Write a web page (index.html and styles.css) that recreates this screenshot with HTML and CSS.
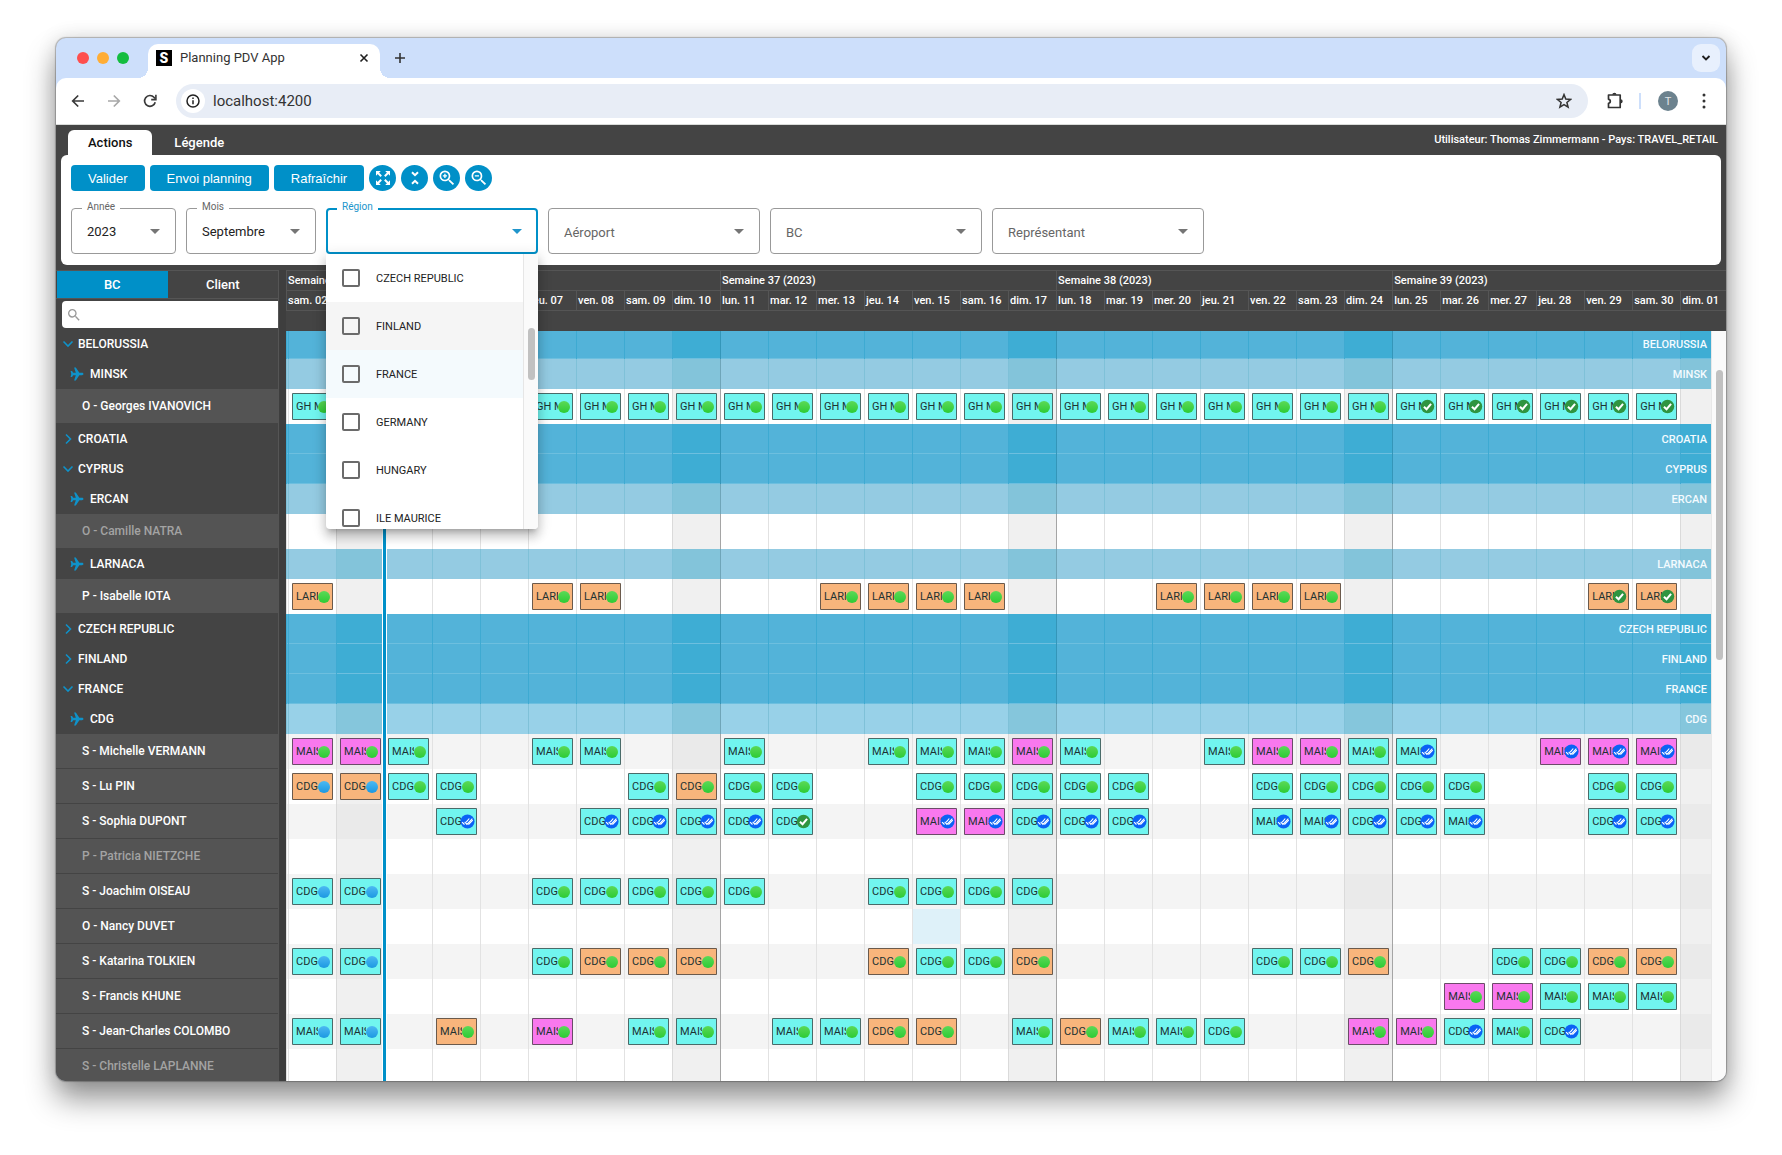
FILE: index.html
```html
<!DOCTYPE html>
<html lang="fr">
<head>
<meta charset="utf-8">
<meta name="viewport" content="width=device-width, initial-scale=1">
<title>Planning PDV App</title>
<link rel="stylesheet" href="styles.css">
</head>
<body>
<svg class="defs" aria-hidden="true">
  <symbol id="i-plane" viewBox="0 0 24 24"><path fill="currentColor" d="M23 12c0-1.200-1-2-2.300-2h-4.700L10 1H7l3 9H5.500L3.500 7H1l1.200 5L1 17h2.500l2-3H10l-3 9h3l6-9h4.700c1.300 0 2.300-.8 2.300-2z"/></symbol>
  <symbol id="i-down" viewBox="0 0 12 12"><path d="M1.500 3.500 6 8l4.500-4.500" fill="none" stroke="currentColor" stroke-width="1.600"/></symbol>
  <symbol id="i-right" viewBox="0 0 12 12"><path d="M4 1.500 8.500 6 4 10.500" fill="none" stroke="currentColor" stroke-width="1.600"/></symbol>
  <symbol id="i-search" viewBox="0 0 24 24"><path fill="currentColor" d="M15.500 14h-.79l-.28-.27A6.470 6.470 0 0 0 16 9.500 6.500 6.500 0 1 0 9.500 16c1.610 0 3.090-.59 4.230-1.570l.27.28v.79l5 4.990L20.490 19l-4.990-5zm-6 0C7.010 14 5 11.990 5 9.500S7.010 5 9.500 5 14 7.010 14 9.500 11.990 14 9.500 14z"/></symbol>
  <symbol id="i-check" viewBox="0 0 16 16"><circle cx="8" cy="8" r="7.200" fill="#2f9440"/><path d="M4.200 8.200 7 10.900 11.800 5.200" fill="none" stroke="#fff" stroke-width="2.200"/></symbol>
  <symbol id="i-double" viewBox="0 0 16 16"><circle cx="8" cy="8" r="7.500" fill="#0b62f5"/><path d="M2.200 8.600 4.800 11.200M5 8.400l2.400 2.600 5.800-6M6.600 8.600 9.900 4.800M9 11.400l4.600-4.800" fill="none" stroke="#fff" stroke-width="1.200"/></symbol>
</svg>

<div class="window">
  <header class="tabstrip">
    <div class="lights"><i class="light red"></i><i class="light amber"></i><i class="light green"></i></div>
    <div class="browser-tab">
      <span class="favicon">S</span>
      <span class="tab-title">Planning PDV App</span>
      <button class="icon-btn" aria-label="Fermer l'onglet"><svg width="10" height="10" viewBox="0 0 10 10"><path d="m1.500 1.500 7 7m0-7-7 7" stroke="#1f1f1f" stroke-width="1.600"/></svg></button>
    </div>
    <button class="icon-btn new-tab" aria-label="Nouvel onglet"><svg width="12" height="12" viewBox="0 0 12 12"><path d="M6 1v10M1 6h10" stroke="#333" stroke-width="1.600"/></svg></button>
    <button class="icon-btn tab-search" aria-label="Rechercher un onglet"><svg width="10" height="10" viewBox="0 0 10 10"><path d="m1.500 3 3.500 3.500L8.500 3" fill="none" stroke="#1f1f1f" stroke-width="1.900"/></svg></button>
  </header>

  <div class="toolbar">
    <button class="icon-btn nav" aria-label="Précédent"><svg width="14" height="14" viewBox="0 0 14 14"><path d="M13 7H2M7.200 1.500 1.700 7l5.500 5.500" fill="none" stroke="#3a3a3a" stroke-width="1.700"/></svg></button>
    <button class="icon-btn nav" aria-label="Suivant"><svg width="14" height="14" viewBox="0 0 14 14"><path d="M1 7h11M6.800 1.500 12.300 7l-5.500 5.500" fill="none" stroke="#a8a8a8" stroke-width="1.700"/></svg></button>
    <button class="icon-btn nav" aria-label="Actualiser"><svg width="14" height="14" viewBox="0 0 14 14"><path d="M12.200 8.200A5.400 5.400 0 1 1 11 3.300l1.200 1.200" fill="none" stroke="#3a3a3a" stroke-width="1.700"/><path d="M12.900.8v4.800H8.200" fill="none" stroke="#3a3a3a" stroke-width="1.600"/></svg></button>
    <div class="omnibox">
      <span class="info"><svg width="14" height="14" viewBox="0 0 14 14"><circle cx="7" cy="7" r="6" fill="none" stroke="#222" stroke-width="1.500"/><path d="M7 6.200v4M7 3.600v1.500" stroke="#222" stroke-width="1.500"/></svg></span>
      <input class="url" aria-label="Adresse" value="localhost:4200">
      <button class="icon-btn star" aria-label="Favori"><svg width="16" height="16" viewBox="0 0 16 16"><path d="m8 1.600 1.800 4.500 4.800.3-3.700 3.100 1.200 4.700L8 11.600l-4.100 2.600 1.200-4.700L1.400 6.400l4.800-.3z" fill="none" stroke="#333" stroke-width="1.500"/></svg></button>
    </div>
    <button class="icon-btn ext" aria-label="Extensions"><svg width="18" height="18" viewBox="0 0 18 18"><path d="M2.500 3h11.700v12.500H2.500v-4.200c2.400-.2 2.400-3.800 0-4z" fill="none" stroke="#333" stroke-width="1.700" stroke-linejoin="round"/><path d="M6.300 2.800a2.100 2.100 0 0 1 4.200 0zM14.600 7.200a2.100 2.100 0 0 1 0 4.200z" fill="#333"/></svg></button>
    <span class="separator"></span>
    <button class="avatar" aria-label="Profil">T</button>
    <button class="icon-btn menu" aria-label="Menu"><svg width="4" height="16" viewBox="0 0 4 16"><circle cx="2" cy="2" r="1.500"/><circle cx="2" cy="8" r="1.500"/><circle cx="2" cy="14" r="1.500"/></svg></button>
  </div>

  <main class="app">
    <div class="app-tabs">
      <button class="app-tab active">Actions</button>
      <button class="app-tab">Légende</button>
      <p class="user">Utilisateur: Thomas Zimmermann - Pays: TRAVEL_RETAIL</p>
    </div>

    <section class="panel">
      <div class="actions">
        <button class="btn">Valider</button>
        <button class="btn">Envoi planning</button>
        <button class="btn">Rafraîchir</button>
        <button class="btn round" aria-label="Tout déplier"><svg width="16" height="16" viewBox="0 0 16 16"><path d="M6.200 6.200 2.500 2.500M9.800 6.200l3.700-3.700M6.200 9.800l-3.700 3.700M9.800 9.800l3.700 3.700" stroke="#fff" stroke-width="2"/><path d="M1 1h4.800L1 5.800zM15 1v4.800L10.200 1zM1 15v-4.800L5.800 15zM15 15h-4.800L15 10.200z" fill="#fff"/></svg></button>
        <button class="btn round" aria-label="Tout replier"><svg width="16" height="16" viewBox="0 0 16 16"><path d="M5 2.200l3 3 3-3M5 13.800l3-3 3 3" fill="none" stroke="#fff" stroke-width="2"/></svg></button>
        <button class="btn round" aria-label="Zoom avant"><svg width="20" height="20" viewBox="0 0 24 24"><use href="#i-search"/><path d="M9.500 7v5M7 9.500h5" stroke="#fff" stroke-width="1.600"/></svg></button>
        <button class="btn round" aria-label="Zoom arrière"><svg width="20" height="20" viewBox="0 0 24 24"><use href="#i-search"/><path d="M7 9.500h5" stroke="#fff" stroke-width="1.600"/></svg></button>
      </div>
      <div class="filters">
        <div class="field year"><label for="annee">Année</label><select id="annee"><option>2023</option></select></div>
        <div class="field month"><label for="mois">Mois</label><select id="mois"><option>Septembre</option></select></div>
        <div class="field open"><label for="region">Région</label><select id="region"><option></option></select>
          <div class="dropdown">
            <div class="options">
              <label class="option"><input type="checkbox">CZECH REPUBLIC</label>
              <label class="option hover"><input type="checkbox">FINLAND</label>
              <label class="option focus"><input type="checkbox">FRANCE</label>
              <label class="option"><input type="checkbox">GERMANY</label>
              <label class="option"><input type="checkbox">HUNGARY</label>
              <label class="option"><input type="checkbox">ILE MAURICE</label>
            </div>
            <div class="dropdown-track"><i class="thumb"></i></div>
          </div>
        </div>
        <div class="field empty"><select aria-label="Aéroport"><option>Aéroport</option></select></div>
        <div class="field empty"><select aria-label="BC"><option>BC</option></select></div>
        <div class="field empty"><select aria-label="Représentant"><option>Représentant</option></select></div>
      </div>
    </section>

    <section class="planning">
      <aside class="sidebar">
        <div class="side-tabs"><button class="side-tab active">BC</button><button class="side-tab">Client</button></div>
        <div class="search"><svg width="16" height="16"><use href="#i-search"/></svg><input type="text" aria-label="Rechercher"></div>
        <ul class="tree" id="tree"></ul>
      </aside>
      <div class="schedule">
        <table class="grid">
          <colgroup id="cols"></colgroup>
          <thead id="head"></thead>
          <tbody id="rows"></tbody>
        </table>
        <i class="now-line"></i>
        <div class="scrollbar"><i class="thumb"></i></div>
      </div>
    </section>
  </main>
</div>
<script src="planning.js"></script>
</body>
</html>
```
FILE: styles.css
```css
* { box-sizing: border-box; }
body { margin: 0; padding: 38px 56px; height: 100vh; background: #fff; font-family: Roboto, "Liberation Sans", sans-serif; font-size: 12px; color: #222; overflow: hidden; }
button, input, select { font: inherit; color: inherit; }
button { border: 0; padding: 0; background: none; }
svg { display: block; flex: none; }
.defs { position: absolute; width: 0; height: 0; }

.window { display: flex; flex-direction: column; height: calc(100vh - 112px); border-radius: 10px; overflow: hidden; background: #cddffb; box-shadow: 0 0 1px 1px rgba(0,0,0,.25), 0 18px 30px rgba(0,0,0,.42), 0 0 20px rgba(0,0,0,.12); }

.tabstrip { display: flex; flex: none; align-items: center; height: 40px; padding: 0 6px 0 21px; }
.lights { display: flex; gap: 8px; width: 71px; }
.light { width: 12px; height: 12px; border-radius: 50%; }
.red { background: #fe4f4e; }
.amber { background: #ffad35; }
.green { background: #14bd3f; }
.icon-btn { display: flex; align-items: center; justify-content: center; flex: none; }
.browser-tab { position: relative; display: flex; align-items: center; align-self: flex-end; width: 232px; height: 34px; padding: 0 11px 6px 8px; border-radius: 10px 10px 0 0; background: #fff; }
.browser-tab::before, .browser-tab::after { content: ""; position: absolute; bottom: 0; width: 10px; height: 10px; }
.browser-tab::before { right: 100%; background: radial-gradient(circle at 0 0, transparent 10px, #fff 10px); }
.browser-tab::after { left: 100%; background: radial-gradient(circle at 100% 0, transparent 10px, #fff 10px); }
.favicon { width: 16px; height: 16px; margin-right: 8px; background: #000; color: #fff; font-size: 14px; font-weight: 900; line-height: 16px; text-align: center; }
.tab-title { flex: 1; padding-bottom: 1px; font-size: 13px; color: #333; }
.new-tab { margin-left: 14px; }
.tab-search { width: 28px; height: 28px; margin-left: auto; border-radius: 9px; background: #e8f0fd; }

.toolbar { display: flex; flex: none; align-items: center; height: 47px; padding: 0 14px; border-bottom: 1px solid #dadcda; border-radius: 10px 10px 0 0; background: #fff; }
.nav { width: 16px; margin-right: 20px; }
.omnibox { display: flex; flex: 1; align-items: center; height: 34px; margin-left: -2px; padding: 0 16px 0 5px; border-radius: 17px; background: #e8edf6; }
.info { display: flex; align-items: center; justify-content: center; width: 24px; height: 24px; border-radius: 50%; background: #fff; }
.url { flex: 1; margin-left: 8px; padding: 0; border: 0; background: none; font-size: 15px; color: #333; outline: 0; }
.ext { margin-left: 18px; }
.separator { width: 2px; height: 16px; margin: 0 17px 0 15px; background: #cddffb; }
.avatar { width: 20px; height: 20px; border-radius: 50%; background: #6c828e; color: #e2e6e8; font-size: 11px; }
.menu { width: 16px; margin-left: 18px; fill: #333; }

.app { display: flex; flex: 1; flex-direction: column; min-height: 0; background: #444; }
.app-tabs { display: flex; flex: none; align-items: flex-end; gap: 2px; height: 30px; padding: 0 8px 0 12px; }
.app-tab { height: 25px; padding: 0 20px; border-radius: 6px 6px 0 0; color: #fff; font-size: 13px; font-weight: 500; }
.app-tab.active { background: #fff; color: #111; }
.user { margin: 0 0 0 auto; padding-bottom: 2px; align-self: center; color: #fff; font-size: 11px; font-weight: 500; }
.panel { flex: none; margin: 0 5px 5px; padding: 10px 10px 11px; border-radius: 6px; background: #fff; }
.actions { display: flex; gap: 5px; }
.btn { height: 26px; padding: 0 17px; border-radius: 4px; background: #0090c8; color: #fff; font-family: "Liberation Sans", Arial, sans-serif; font-size: 13px; }
.btn.round { display: flex; align-items: center; justify-content: center; width: 27px; padding: 0; border-radius: 50%; }
.filters { display: flex; gap: 10px; margin-top: 17px; }
.field { position: relative; width: 212px; height: 46px; }
.field.year { width: 105px; }
.field.month { width: 130px; }
.field select { width: 100%; height: 100%; padding: 0 15px; border: 1px solid #999; border-radius: 4px; background: none; appearance: none; font-size: 13px; outline: 0; }
.field > label { position: absolute; left: 11px; top: -8px; padding: 0 5px; background: #fff; color: #666; font-size: 10px; line-height: 14px; }
.field::after { content: ""; position: absolute; right: 16px; top: 21px; border: 5px solid transparent; border-top-color: #757575; border-bottom: 0; }
.field.empty select { padding-top: 2px; color: #666; }
.field.open { z-index: 5; border-radius: 4px; background: #fff; }
.field.open select { border: 2px solid #0090c8; }
.field.open > label { color: #2095cb; }
.field.open::after { border-top-color: #2095cb; }

.dropdown { position: absolute; top: 100%; left: 0; display: flex; width: 100%; height: 275px; border-radius: 0 0 4px 4px; overflow: hidden; background: #fff; box-shadow: 0 5px 5px -3px rgba(0,0,0,.2), 0 8px 10px 1px rgba(0,0,0,.14), 0 3px 14px 2px rgba(0,0,0,.12); }
.options { flex: 1; overflow: hidden; }
.option { display: flex; align-items: center; gap: 16px; height: 48px; padding-left: 16px; font-size: 11px; }
.option.hover { background: #f5f5f5; }
.option.focus { background: #f4fafd; }
.option input { width: 18px; height: 18px; margin: 0; border: 2px solid #6b6b6b; border-radius: 2px; appearance: none; }
.dropdown-track { width: 15px; padding: 74px 3px 0 4px; border-left: 1px solid #e6e6e6; background: #fafafa; }
.thumb { display: block; border-radius: 4px; background: #c1c1c1; }
.dropdown-track .thumb { height: 52px; }

.planning { display: flex; flex: 1; min-height: 0; overflow: hidden; }
.sidebar { flex: none; width: 230px; height: 100%; padding-right: 8px; background: linear-gradient(90deg, transparent 222px, #555 222px, #555 223px, #3e3e3e 223px); }
.side-tabs { display: flex; height: 29px; padding-left: 1px; border: solid #555; border-width: 1px 0; }
.side-tab { flex: 1; color: #fff; font-size: 13px; font-weight: 500; }
.side-tab.active { background: #0090c8; }
.search { display: flex; align-items: center; height: 27px; margin: 2px 0 1px 6px; padding-left: 4px; border-radius: 4px 0 0 4px; background: #fff; color: #999; }
.search input { flex: 1; min-width: 0; border: 0; background: none; outline: 0; }
.tree { margin: 0; padding: 0; list-style: none; color: #fff; font-weight: 500; }
.tree li { display: flex; align-items: center; height: 30px; }
.tree svg { color: #0f92c9; }
.tree .country { gap: 4px; padding-left: 6px; }
.tree .airport { gap: 6px; padding-left: 14px; }
.tree .person { height: 35px; padding-left: 26px; border-bottom: 1px solid #444; background: #545454; }
.tree .off { color: #a3a3a3; }

.schedule { position: relative; flex: 1; min-width: 0; overflow: hidden; }
.grid { width: 100%; border-collapse: separate; border-spacing: 0; table-layout: fixed; }
.grid th, .grid td { padding: 0; }
.grid col { width: 48px; }
.grid .edge { width: 2px; }
.grid .rest { width: auto; }
.grid th { height: 20px; padding-left: 1px; border: solid #555; border-width: 1px 0 0 1px; color: #fff; font-size: 11px; font-weight: 500; line-height: 19px; text-align: left; white-space: nowrap; overflow: hidden; }
.grid .gap td { height: 21px; border-top: 1px solid #555; background: #444; }
.grid tbody tr { height: 30px; background: #fff; }
.grid tbody tr:first-child { height: 28px; }
.grid tbody .person { height: 35px; }
.grid tbody .alt { background: #f4f4f4; }
.grid tbody td { position: relative; vertical-align: top; box-shadow: inset 1px 0 #e2e2e2; }
.grid tbody .mon { box-shadow: inset 1px 0 #a5a5a5; }
.grid tbody .sun { background: rgba(0,0,0,.06); box-shadow: inset 1px 0 #dadada; }
.grid tbody .alt .sun { background: rgba(0,0,0,.04); }
.grid .picked { background: #def1f9; }
.grid tbody .country td { background: #53b3d9; box-shadow: inset 1px 0 #3eaad2, inset 0 -1px #6dbfdf; }
.grid tbody .country .mon { box-shadow: inset 1px 0 #3496b9, inset 0 -1px #6dbfdf; }
.grid tbody .country .sun { background: #3eadd4; }
.grid tbody .airport td { background: #94cbe2; box-shadow: inset 1px 0 #7fc1d8; }
.grid tbody .airport .mon { box-shadow: inset 1px 0 #6fa5b8; }
.grid tbody .airport .sun { background: #83c4da; }
.grid tbody .bright td { background: #98d1e8; }
.grid tbody .bright .sun { background: #85c6dc; }
.row-label { position: absolute; z-index: 1; right: 19px; bottom: 0; color: #f4fbff; font-size: 11px; font-weight: 500; line-height: 28px; white-space: nowrap; }
.event { position: absolute; left: 4px; top: 4px; display: flex; align-items: center; width: 41px; height: 27px; padding-left: 3px; border: 1px solid rgba(60,60,60,.75); border-radius: 1px; color: #1d3232; font-size: 11px; }
.cyan { background: #71f5ef; }
.orange { background: #f8b57c; }
.pink { background: #f978ee; }
.event-text { width: 22px; overflow: hidden; white-space: nowrap; }
.dot { width: 12px; height: 12px; border-radius: 50%; }
.dot.ok { background: linear-gradient(#5bd957, #2dcb35); }
.dot.sent { background: linear-gradient(#4cb9f2, #1c98e2); }
.event svg { margin-left: -2px; }
.now-line { position: absolute; left: 96px; top: 61px; bottom: 0; width: 5px; border: solid #fff; border-width: 0 1px; background: #0090c8; }
.scrollbar { position: absolute; right: 0; top: 61px; bottom: 0; width: 15px; padding: 39px 3px 0 4px; border-left: 1px solid #e8e8e8; background: #fafafa; }
.scrollbar .thumb { height: 290px; }
```
FILE: planning.js
```js
const DAYS = ['dim.', 'lun.', 'mar.', 'mer.', 'jeu.', 'ven.', 'sam.'];
const COUNT = 30;
const PLACES = { G: 'GH M', L: 'LARN', M: 'MAIS', C: 'CDG' };
const COLOURS = { c: 'cyan', o: 'orange', p: 'pink' };

// Events: "first-last" day offset, then place, colour and status
// (g confirmed, b sent, v validated, d double validated).
const ROWS = [
  { type: 'country', name: 'BELORUSSIA', open: true },
  { type: 'airport', name: 'MINSK' },
  { type: 'person', name: 'O - Georges IVANOVICH', events: '0-22Gcg 23-28Gcv' },
  { type: 'country', name: 'CROATIA' },
  { type: 'country', name: 'CYPRUS', open: true },
  { type: 'airport', name: 'ERCAN' },
  { type: 'person', name: 'O - Camille NATRA', off: true },
  { type: 'airport', name: 'LARNACA' },
  { type: 'person', name: 'P - Isabelle IOTA', events: '0Log 5-6Log 11-14Log 18-21Log 27-28Lov' },
  { type: 'country', name: 'CZECH REPUBLIC' },
  { type: 'country', name: 'FINLAND' },
  { type: 'country', name: 'FRANCE', open: true },
  { type: 'airport', name: 'CDG', bright: true },
  { type: 'person', name: 'S - Michelle VERMANN', alt: true, events: '0-1Mpg 2Mcg 5-6Mcg 9Mcg 12-14Mcg 15Mpg 16Mcg 19Mcg 20-21Mpg 22Mcg 23Mcd 26-28Mpd' },
  { type: 'person', name: 'S - Lu PIN', events: '0-1Cob 2-3Ccg 7Ccg 8Cog 9-10Ccg 13-17Ccg 20-24Ccg 27-28Ccg' },
  { type: 'person', name: 'S - Sophia DUPONT', alt: true, events: '3Ccd 6-9Ccd 10Ccv 13-14Mpd 15-17Ccd 20-21Mcd 22-23Ccd 24Mcd 27-28Ccd' },
  { type: 'person', name: 'P - Patricia NIETZCHE', off: true },
  { type: 'person', name: 'S - Joachim OISEAU', alt: true, events: '0-1Ccb 5-9Ccg 12-15Ccg' },
  { type: 'person', name: 'O - Nancy DUVET', picked: 13 },
  { type: 'person', name: 'S - Katarina TOLKIEN', alt: true, events: '0-1Ccb 5Ccg 6-8Cog 12Cog 13-14Ccg 15Cog 20-21Ccg 22Cog 25-26Ccg 27-28Cog' },
  { type: 'person', name: 'S - Francis KHUNE', events: '24-25Mpg 26-28Mcg' },
  { type: 'person', name: 'S - Jean-Charles COLOMBO', alt: true, events: '0-1Mcb 3Mog 5Mpg 7-8Mcg 10-11Mcg 12-13Cog 15Mcg 16Cog 17-18Mcg 19Ccg 22-23Mpg 24Ccd 25Mcg 26Ccd' },
  { type: 'person', name: 'S - Christelle LAPLANNE', off: true }
];

const icon = (id, size) => `<svg width="${size}" height="${size}"><use href="#i-${id}"/></svg>`;
const badge = { g: '<i class="dot ok"></i>', b: '<i class="dot sent"></i>', v: icon('check', 15), d: icon('double', 15) };

function parseEvents(text = '') {
  const byDay = {};
  for (const [, a, b, place, colour, status] of text.matchAll(/(\d+)(?:-(\d+))?([A-Z])(\w)(\w)/g)) {
    for (let d = +a; d <= +(b || a); d++) {
      byDay[d] = `<div class="event ${COLOURS[colour]}"><span class="event-text">${PLACES[place]}</span>${badge[status]}</div>`;
    }
  }
  return byDay;
}

// The first visible day is Saturday 2 September 2023.
const weekday = i => (i + 6) % 7;

document.getElementById('cols').innerHTML =
  '<col class="edge">' + '<col>'.repeat(COUNT - 1) + '<col class="rest">';

let weeks = '<th colspan="3">Semaine 35 (2023)</th>';
['36', '37', '38', '39'].forEach(w => { weeks += `<th colspan="7">Semaine ${w} (2023)</th>`; });
let days = '';
for (let i = 0; i < COUNT; i++) {
  const n = i === COUNT - 1 ? 1 : i + 2;
  days += `<th${i ? '' : ' colspan="2"'}>${DAYS[weekday(i)]} ${String(n).padStart(2, '0')}</th>`;
}
document.getElementById('head').innerHTML =
  `<tr>${weeks}</tr><tr>${days}</tr><tr class="gap"><td colspan="${COUNT + 1}"></td></tr>`;

document.getElementById('rows').innerHTML = ROWS.map(row => {
  const events = parseEvents(row.events);
  let cells = '<td></td>';
  for (let i = 0; i < COUNT; i++) {
    const kind = row.picked === i ? 'picked' : { 0: 'sun', 1: 'mon' }[weekday(i)] || '';
    const label = i === COUNT - 1 && row.type !== 'person' ? `<span class="row-label">${row.name}</span>` : '';
    cells += `<td class="${kind}">${events[i] || ''}${label}</td>`;
  }
  return `<tr class="${row.type}${row.alt ? ' alt' : ''}${row.bright ? ' bright' : ''}">${cells}</tr>`;
}).join('');

document.getElementById('tree').innerHTML = ROWS.map(row => {
  const mark = row.type === 'country' ? icon(row.open ? 'down' : 'right', 12)
    : row.type === 'airport' ? icon('plane', 14) : '';
  return `<li class="${row.type}${row.off ? ' off' : ''}">${mark}${row.name}</li>`;
}).join('');
```
